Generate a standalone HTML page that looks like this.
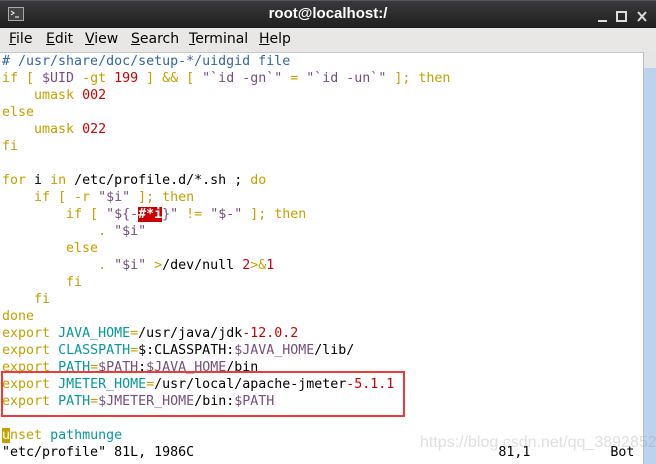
<!DOCTYPE html>
<html><head><meta charset="utf-8"><style>
body{margin:0;width:656px;height:464px;overflow:hidden;background:#fff;position:relative;font-family:"Liberation Sans",sans-serif}
#title{position:absolute;left:0;top:0;width:656px;height:27px;background:linear-gradient(#3a3a3a,#1e1e1e);border-top:1px solid #556;}
#title .t{position:absolute;left:0;width:656px;top:4px;text-align:center;color:#fff;font-weight:bold;font-size:15px}
#menu{position:absolute;left:0;top:28px;width:656px;height:24px;background:#e8e7e5;border-bottom:1px solid #c8c8c8;font-size:14px;color:#000;font-family:"DejaVu Sans",sans-serif}
#menu span{position:absolute;top:3px}
#term{position:absolute;left:2px;top:53px;font-family:"DejaVu Sans Mono",monospace;font-size:13.3px;line-height:17px;white-space:pre;color:#000}
.y{color:#c4a000}.b{color:#3465a4}.p{color:#75507b}.r{color:#cc0000}.c{color:#06989a}
#sb{position:absolute;left:643px;top:52px;width:13px;height:412px;background:#e6e6e6;border-left:1px solid #bbb}
#thumb{position:absolute;left:644px;top:68px;width:12px;height:396px;background:#bcd3ee}
#box{position:absolute;left:1px;top:371px;width:400px;height:42px;border:2px solid #f03a3a}
</style></head><body>
<div id="title"><svg style="position:absolute;left:8px;top:6px" width="16" height="14"><rect x="0.5" y="0.5" width="15" height="13" fill="#444" stroke="#aaa"/><path d="M3 4l3 2-3 2M7 10h4" stroke="#fff" fill="none"/></svg><div class="t">root@localhost:/</div>
<svg style="position:absolute;left:596px;top:10px" width="55" height="12"><path d="M2 10h9" stroke="#ddd" stroke-width="2"/><rect x="21" y="1" width="9" height="9" fill="none" stroke="#ddd" stroke-width="2"/><path d="M42 1l8 9M50 1l-8 9" stroke="#ddd" stroke-width="2"/></svg></div>
<div id="menu"><span style="left:9px"><u>F</u>ile</span><span style="left:46px"><u>E</u>dit</span><span style="left:85px"><u>V</u>iew</span><span style="left:131px"><u>S</u>earch</span><span style="left:189px"><u>T</u>erminal</span><span style="left:259px"><u>H</u>elp</span></div>
<div id="sb"></div><div id="thumb"></div>
<div id="term"><span class="b"># /usr/share/doc/setup-*/uidgid file</span>
<span class="y">if [ </span><span class="p">$UID</span><span class="y"> -gt </span><span class="r">199</span><span class="y"> ] &amp;&amp; [ </span><span class="p">"`id -gn`"</span><span class="y"> = </span><span class="p">"`id -un`"</span><span class="y"> ]; then</span>
<span class="y">    umask </span><span class="r">002</span>
<span class="y">else</span>
<span class="y">    umask </span><span class="r">022</span>
<span class="y">fi</span>

<span class="y">for</span> i <span class="y">in</span> /etc/profile.d/*.sh ; <span class="y">do</span>
<span class="y">    if [ -r </span><span class="p">"$i"</span><span class="y"> ]; then</span>
<span class="y">        if [ </span><span class="p">"${-</span><span style="background:#cc0000;color:#fff;font-weight:bold">#*i</span><span class="p">}"</span><span class="y"> != </span><span class="p">"$-"</span><span class="y"> ]; then</span>
<span class="y">            . </span><span class="p">"$i"</span>
<span class="y">        else</span>
<span class="y">            . </span><span class="p">"$i"</span> <span class="y">&gt;</span>/dev/null <span class="r">2</span><span class="y">&gt;&amp;</span><span class="r">1</span>
<span class="y">        fi</span>
<span class="y">    fi</span>
<span class="y">done</span>
<span class="y">export</span> <span class="c">JAVA_HOME</span><span class="y">=</span>/usr/java/jdk<span class="r">-12.0.2</span>
<span class="y">export</span> <span class="c">CLASSPATH</span><span class="y">=</span>$:CLASSPATH:<span class="p">$JAVA_HOME</span>/lib/
<span class="y">export</span> <span class="c">PATH</span><span class="y">=</span><span class="p">$PATH</span>:<span class="p">$JAVA_HOME</span>/bin
<span class="y">export</span> <span class="c">JMETER_HOME</span><span class="y">=</span>/usr/local/apache-jmeter<span class="r">-5.1.1</span>
<span class="y">export</span> <span class="c">PATH</span><span class="y">=</span><span class="p">$JMETER_HOME</span>/bin:<span class="p">$PATH</span>

<span style="background:#c4a000;color:#fff">u</span><span class="y">nset</span> <span class="c">pathmunge</span>
"etc/profile" 81L, 1986C                                      81,1          Bot</div>
<div id="box"></div>
<div style="position:absolute;left:420px;top:434px;font-size:16px;color:rgba(150,150,150,.3)">https://blog.csdn.net/qq_38928520</div>
</body></html>
